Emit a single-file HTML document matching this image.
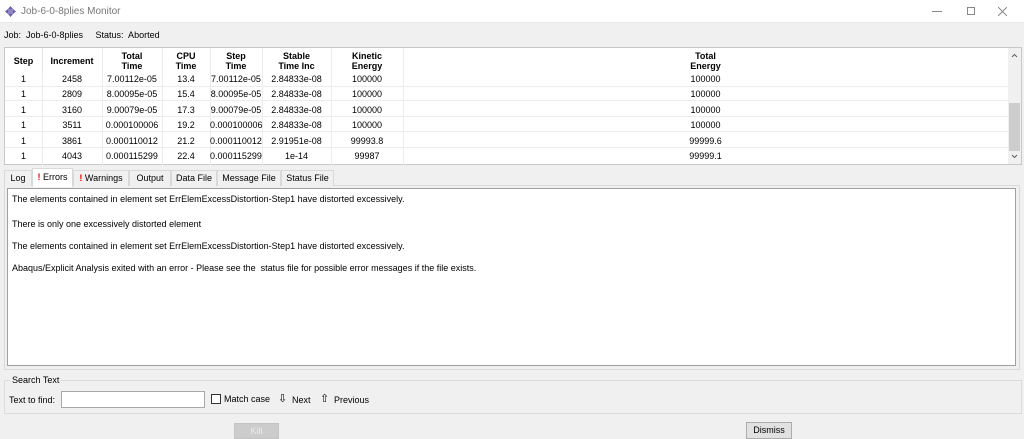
<!DOCTYPE html>
<html><head><meta charset="utf-8"><style>
*{margin:0;padding:0;box-sizing:border-box}
body{width:1024px;height:439px;background:#f0f0f0;font-family:"Liberation Sans",sans-serif;font-size:9px;color:#000;position:relative;overflow:hidden}
.a{position:absolute;white-space:nowrap}
.c{text-align:center}
.hd{font-weight:bold;line-height:10px;text-align:center}
.row{position:absolute;left:5px;width:1003px;height:15px;border-bottom:1px solid #ececec}
.tab{position:absolute;top:170px;height:16px;border:1px solid #d9d9d9;border-bottom:none;background:#f0f0f0;text-align:center;line-height:15px}
</style></head><body>
<div class="a" style="left:0;top:0;width:1024px;height:23px;background:#fff;border-bottom:1px solid #e8e8e8"></div>
<svg class="a" style="left:5px;top:6px" width="11" height="11" viewBox="0 0 11 11"><path d="M5.5 0L8 3H3z M5.5 11L3 8h5z M0 5.5L3 3v5z M11 5.5L8 3v5z" fill="#6a5fa8"/><rect x="3" y="3" width="5" height="5" fill="#8e86c4"/></svg>
<div class="a" style="left:21px;top:6px;font-size:10px;color:#777">Job-6-0-8plies Monitor</div>
<div class="a" style="left:932px;top:11px;width:10px;height:1px;background:#888"></div>
<div class="a" style="left:967px;top:7px;width:8px;height:8px;border:1px solid #888"></div>
<svg class="a" style="left:998px;top:7px" width="9" height="9" viewBox="0 0 9 9"><path d="M0 0L9 9M9 0L0 9" stroke="#888" stroke-width="1"/></svg>
<div class="a" style="left:4px;top:30px">Job:&nbsp; Job-6-0-8plies &nbsp;&nbsp;&nbsp; Status:&nbsp; Aborted</div>

<div class="a" style="left:4px;top:47px;width:1018px;height:118px;background:#fff;border:1px solid #c8c8c8"></div>
<div class="a" style="left:5px;top:48px;width:1003px;height:26px;background:#fff"></div>
<div class="a hd" style="left:5px;top:56px;width:37px">Step</div>
<div class="a hd" style="left:42px;top:56px;width:60px">Increment</div>
<div class="a hd" style="left:102px;top:51px;width:60px">Total<br>Time</div>
<div class="a hd" style="left:162px;top:51px;width:48px">CPU<br>Time</div>
<div class="a hd" style="left:210px;top:51px;width:52px">Step<br>Time</div>
<div class="a hd" style="left:262px;top:51px;width:69px">Stable<br>Time Inc</div>
<div class="a hd" style="left:331px;top:51px;width:72px">Kinetic<br>Energy</div>
<div class="a hd" style="left:403px;top:51px;width:605px">Total<br>Energy</div>
<div class="a" style="left:42px;top:48px;width:1px;height:26px;background:#e5e5e5"></div>
<div class="a" style="left:102px;top:48px;width:1px;height:117px;background:#ececec"></div>
<div class="a" style="left:162px;top:48px;width:1px;height:117px;background:#ececec"></div>
<div class="a" style="left:210px;top:48px;width:1px;height:117px;background:#ececec"></div>
<div class="a" style="left:262px;top:48px;width:1px;height:117px;background:#ececec"></div>
<div class="a" style="left:331px;top:48px;width:1px;height:117px;background:#ececec"></div>
<div class="a" style="left:403px;top:48px;width:1px;height:117px;background:#ececec"></div>
<div class="a" style="left:42px;top:74px;width:1px;height:91px;background:#ececec"></div>

<div class="row" style="top:72px"></div>
<div class="a c" style="left:5px;top:74px;width:37px">1</div><div class="a c" style="left:42px;top:74px;width:60px">2458</div><div class="a c" style="left:102px;top:74px;width:60px">7.00112e-05</div><div class="a c" style="left:162px;top:74px;width:48px">13.4</div><div class="a c" style="left:210px;top:74px;width:52px">7.00112e-05</div><div class="a c" style="left:262px;top:74px;width:69px">2.84833e-08</div><div class="a c" style="left:331px;top:74px;width:72px">100000</div><div class="a c" style="left:403px;top:74px;width:605px">100000</div>
<div class="row" style="top:86px"></div>
<div class="a c" style="left:5px;top:89px;width:37px">1</div><div class="a c" style="left:42px;top:89px;width:60px">2809</div><div class="a c" style="left:102px;top:89px;width:60px">8.00095e-05</div><div class="a c" style="left:162px;top:89px;width:48px">15.4</div><div class="a c" style="left:210px;top:89px;width:52px">8.00095e-05</div><div class="a c" style="left:262px;top:89px;width:69px">2.84833e-08</div><div class="a c" style="left:331px;top:89px;width:72px">100000</div><div class="a c" style="left:403px;top:89px;width:605px">100000</div>
<div class="row" style="top:102px"></div>
<div class="a c" style="left:5px;top:105px;width:37px">1</div><div class="a c" style="left:42px;top:105px;width:60px">3160</div><div class="a c" style="left:102px;top:105px;width:60px">9.00079e-05</div><div class="a c" style="left:162px;top:105px;width:48px">17.3</div><div class="a c" style="left:210px;top:105px;width:52px">9.00079e-05</div><div class="a c" style="left:262px;top:105px;width:69px">2.84833e-08</div><div class="a c" style="left:331px;top:105px;width:72px">100000</div><div class="a c" style="left:403px;top:105px;width:605px">100000</div>
<div class="row" style="top:117px"></div>
<div class="a c" style="left:5px;top:120px;width:37px">1</div><div class="a c" style="left:42px;top:120px;width:60px">3511</div><div class="a c" style="left:102px;top:120px;width:60px">0.000100006</div><div class="a c" style="left:162px;top:120px;width:48px">19.2</div><div class="a c" style="left:210px;top:120px;width:52px">0.000100006</div><div class="a c" style="left:262px;top:120px;width:69px">2.84833e-08</div><div class="a c" style="left:331px;top:120px;width:72px">100000</div><div class="a c" style="left:403px;top:120px;width:605px">100000</div>
<div class="row" style="top:133px"></div>
<div class="a c" style="left:5px;top:136px;width:37px">1</div><div class="a c" style="left:42px;top:136px;width:60px">3861</div><div class="a c" style="left:102px;top:136px;width:60px">0.000110012</div><div class="a c" style="left:162px;top:136px;width:48px">21.2</div><div class="a c" style="left:210px;top:136px;width:52px">0.000110012</div><div class="a c" style="left:262px;top:136px;width:69px">2.91951e-08</div><div class="a c" style="left:331px;top:136px;width:72px">99993.8</div><div class="a c" style="left:403px;top:136px;width:605px">99999.6</div>
<div class="a c" style="left:5px;top:151px;width:37px">1</div><div class="a c" style="left:42px;top:151px;width:60px">4043</div><div class="a c" style="left:102px;top:151px;width:60px">0.000115299</div><div class="a c" style="left:162px;top:151px;width:48px">22.4</div><div class="a c" style="left:210px;top:151px;width:52px">0.000115299</div><div class="a c" style="left:262px;top:151px;width:69px">1e-14</div><div class="a c" style="left:331px;top:151px;width:72px">99987</div><div class="a c" style="left:403px;top:151px;width:605px">99999.1</div>

<div class="a" style="left:1008px;top:48px;width:13px;height:116px;background:#f0f0f0"></div>
<div class="a" style="left:1009px;top:103px;width:11px;height:48px;background:#cdcdcd"></div>
<svg class="a" style="left:1011px;top:53px" width="7" height="5" viewBox="0 0 7 5"><path d="M1 4L3.5 1.5L6 4" stroke="#606060" fill="none"/></svg>
<svg class="a" style="left:1011px;top:154px" width="7" height="5" viewBox="0 0 7 5"><path d="M1 1L3.5 3.5L6 1" stroke="#606060" fill="none"/></svg>

<div class="a" style="left:4px;top:185px;width:1016px;height:185px;border:1px solid #d9d9d9;background:#f0f0f0"></div>
<div class="tab" style="left:4px;width:28px">Log</div>
<div class="tab" style="left:73px;width:56px"><span style="color:#e00;font-weight:bold">!</span> Warnings</div>
<div class="tab" style="left:129px;width:42px">Output</div>
<div class="tab" style="left:171px;width:46px">Data File</div>
<div class="tab" style="left:217px;width:64px">Message File</div>
<div class="tab" style="left:281px;width:53px">Status File</div>
<div class="tab" style="left:32px;top:168px;width:41px;height:19px;background:#fff;line-height:16px"><span style="color:#e00;font-weight:bold">!</span> Errors</div>
<div class="a" style="left:7px;top:188px;width:1009px;height:178px;background:#fff;border:1px solid #a0a0a0"></div>
<div class="a" style="left:12px;top:194px">The elements contained in element set ErrElemExcessDistortion-Step1 have distorted excessively.</div>
<div class="a" style="left:12px;top:219px">There is only one excessively distorted element</div>
<div class="a" style="left:12px;top:241px">The elements contained in element set ErrElemExcessDistortion-Step1 have distorted excessively.</div>
<div class="a" style="left:12px;top:263px">Abaqus/Explicit Analysis exited with an error - Please see the &nbsp;status file for possible error messages if the file exists.</div>

<div class="a" style="left:4px;top:380px;width:1018px;height:34px;border:1px solid #dcdcdc"></div>
<div class="a" style="left:10px;top:375px;background:#f0f0f0;padding:0 2px">Search Text</div>
<div class="a" style="left:9px;top:395px">Text to find:</div>
<div class="a" style="left:61px;top:391px;width:144px;height:17px;background:#fff;border:1px solid #a8a8a8"></div>
<div class="a" style="left:211px;top:394px;width:10px;height:10px;border:1px solid #333;background:#fff"></div>
<div class="a" style="left:224px;top:394px">Match case</div>
<div class="a" style="left:278px;top:392px;font-size:11px">⇩</div>
<div class="a" style="left:292px;top:395px">Next</div>
<div class="a" style="left:320px;top:392px;font-size:11px">⇧</div>
<div class="a" style="left:334px;top:395px">Previous</div>

<div class="a c" style="left:234px;top:423px;width:45px;height:16px;background:#ccc;border:1px solid #c4c4c4;color:#eee;line-height:14px">Kill</div>
<div class="a c" style="left:746px;top:422px;width:46px;height:17px;background:#e1e1e1;border:1px solid #adadad;line-height:15px">Dismiss</div>
</body></html>
